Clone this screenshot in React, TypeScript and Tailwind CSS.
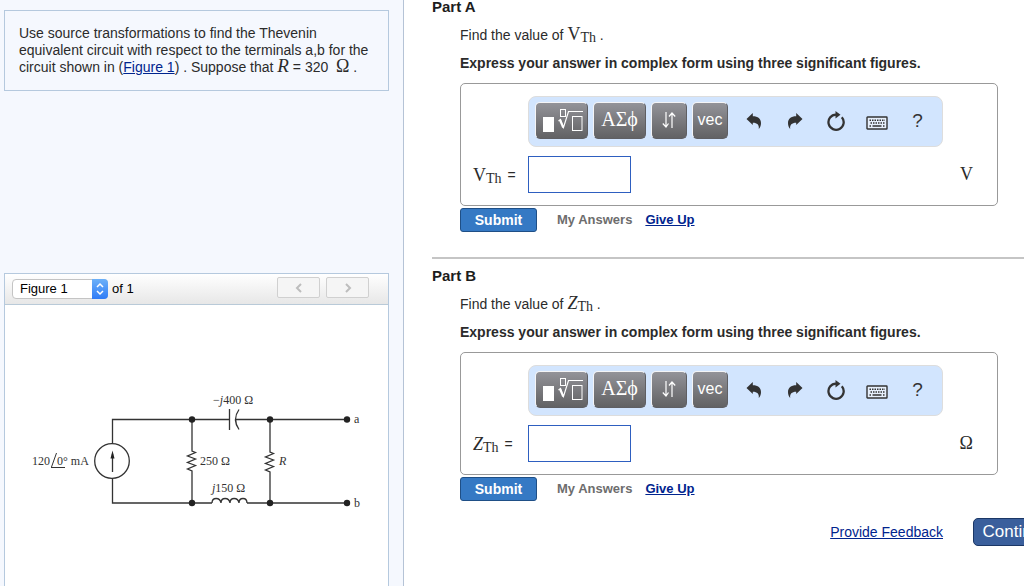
import type { ReactNode } from "react";

const serif = "font-['Liberation_Serif','Noto_Sans_CJK_SC',serif]";

function MathVar({ name, italic = false }: { name: string; italic?: boolean }) {
  return (
    <span className="whitespace-nowrap font-['Liberation_Serif',serif] text-[18px] leading-none">
      <span className={italic ? "italic" : ""}>{name}</span>
      <sub className="bottom-[-2px] text-[14px]">Th</sub>
    </span>
  );
}

function ToolButton({ label, wide = false, children }: { label: string; wide?: boolean; children: ReactNode }) {
  return (
    <button
      type="button"
      aria-label={label}
      className={
        "flex h-[37px] shrink-0 items-center justify-center rounded-[5px] border border-t-[#f4f4f6] border-l-[#f4f4f6] border-r-[#5f5f63] border-b-[#5f5f63] bg-linear-to-b from-[#939399] to-[#626264] pb-[2px] text-white " +
        (wide ? "w-[53px]" : "w-[36px]")
      }
    >
      {children}
    </button>
  );
}

function IconButton({ label, children }: { label: string; children: ReactNode }) {
  return (
    <button type="button" aria-label={label} className="flex h-[37px] w-[41px] items-center justify-center text-[#333]">
      {children}
    </button>
  );
}

function TemplateIcon() {
  return (
    <svg width="42" height="26" viewBox="0 0 42 26" fill="none" stroke="white">
      <rect x="2" y="10" width="11" height="15" fill="white" stroke="none" />
      <rect x="19.500" y="2.500" width="5" height="7" />
      <path d="M17.500 14l2-1.500 3 8L27.500 4.500H42" strokeWidth="1.200" />
      <path d="M19 13l3.200 7.500" strokeWidth="2" />
      <rect x="31.500" y="9.500" width="9.500" height="14" />
    </svg>
  );
}

function ArrowsIcon() {
  return (
    <svg width="14" height="18" viewBox="0 0 14 18" fill="none" stroke="white" strokeWidth="1.200">
      <path d="M4 1v15M.8 12.500L4 16l2.500-3.500M10 17V2M7 5.500L10 2l3.200 3.500" />
    </svg>
  );
}

function UndoIcon({ flip = false }: { flip?: boolean }) {
  return (
    <svg width="16" height="18" viewBox="0 0 16 18" fill="currentColor">
      <path
        transform={flip ? "translate(16 0) scale(-1 1)" : undefined}
        d="M.5 7L6.800 1v3.300c5.200 0 8.200 2.600 8.200 6.700 0 2.400-.7 4.300-2.200 6 .5-4.200-1.500-6.300-6-6.300V13z"
      />
    </svg>
  );
}

function ResetIcon() {
  return (
    <svg width="20" height="20" viewBox="0 0 20 20">
      <path d="M15.800 6.200A7.600 7.600 0 1 1 10 3.600" fill="none" stroke="currentColor" strokeWidth="2.300" />
      <path d="M9.500 0l5 3.800-5 3.600z" fill="currentColor" />
    </svg>
  );
}

function KeyboardIcon() {
  return (
    <svg width="22" height="18" viewBox="0 -4 22 18">
      <rect x="1" y="1" width="20" height="12" rx=".5" fill="#e6effb" stroke="currentColor" strokeWidth="1.400" />
      <path d="M3.500 4.200h15.500M4.500 7h14" stroke="currentColor" strokeWidth="1.500" strokeDasharray="1.500 1" />
      <path d="M3.500 10h1.500M6.500 10h9M17 10h1.500" stroke="currentColor" strokeWidth="1.500" />
    </svg>
  );
}

function Part({ id, title, name, italic, unit }: { id: string; title: string; name: string; italic?: boolean; unit: string }) {
  return (
    <section>
      <h2 className="text-[15px] leading-[14px] font-bold text-[#1d1d1d]">{title}</h2>
      <div className="mr-[26px] ml-7">
        <p className="mt-[11px] h-5 leading-5">
          Find the value of <MathVar name={name} italic={italic} /> .
        </p>
        <p className="mt-2 leading-5 font-bold">
          Express your answer in complex form using three significant figures.
        </p>
        <div className="mt-[10px] grid grid-cols-[55px_minmax(0,1fr)] gap-y-[9px] rounded-[5px] border border-[#999] pt-3 pr-6 pb-3 pl-3">
          <div className="col-start-2 flex h-[51px] w-[415px] items-center gap-[5px] rounded-[8px] border border-[#ddd] bg-[#d2e5fe] pb-[2px] pl-[6px]">
            <ToolButton label="Templates" wide>
              <TemplateIcon />
            </ToolButton>
            <ToolButton label="Greek symbols" wide>
              <span className={serif + " text-[20px]"}>ΑΣϕ</span>
            </ToolButton>
            <ToolButton label="Arrows">
              <ArrowsIcon />
            </ToolButton>
            <ToolButton label="Vector">
              <span className="text-base">vec</span>
            </ToolButton>
            <div className="flex">
              <IconButton label="Undo">
                <UndoIcon />
              </IconButton>
              <IconButton label="Redo">
                <UndoIcon flip />
              </IconButton>
              <IconButton label="Reset">
                <ResetIcon />
              </IconButton>
              <IconButton label="Keyboard shortcuts">
                <KeyboardIcon />
              </IconButton>
              <IconButton label="Help">
                <span className="text-[19px]">?</span>
              </IconButton>
            </div>
          </div>
          <label htmlFor={id} className="flex items-center gap-[6px] self-center whitespace-nowrap">
            <MathVar name={name} italic={italic} />
            <span>=</span>
          </label>
          <div className="flex items-center justify-between">
            <input id={id} type="text" className="h-[37px] w-[103px] border border-[#2e5fc0] bg-white px-2 outline-none" />
            <span className={serif + " text-[18px]"}>{unit}</span>
          </div>
        </div>
        <div className="mt-[2px] flex h-6 items-center text-[13px] font-bold">
          <button type="button" className="h-6 w-[77px] rounded-[3px] border border-[#1f4f86] bg-[#3579c4] text-sm text-white">
            Submit
          </button>
          <span className="ml-5 text-[#6d6d6d]">My Answers</span>
          <a href="#give-up" className="ml-[13px] text-[#00248e] underline">
            Give Up
          </a>
        </div>
      </div>
    </section>
  );
}

function Circuit() {
  return (
    <svg viewBox="5 305 383 281" className="block w-full" role="img" aria-label="Circuit with terminals a and b">
      <g fill="none" stroke="#333" strokeWidth="1.300">
        <path d="M112.500 443.500V419.500H229.500M236 419.500H347M112.500 478V503H212M247 503H347" />
        <circle cx="112" cy="461" r="17.300" />
        <path d="M112.500 472V454" />
        <path d="M192 419.500V451l3.500 1.500-8 3.500 8 3-8 3.500 8 3-8 3.500 4.500 2V503" />
        <path d="M270 419.500V452l3.500 1.500-8 3.500 8 3-8 3.500 8 3-8 3.500 4.500 2V503" />
        <path d="M229.500 409v21M239 409.500q-7 10 0 20" />
        <path d="M212 503c0-6 8-6 9 0 0-6 8-6 9 0 0-6 8-6 9 0 0-6 8-6 8 0" />
        <path d="M51 467.500h14M51.500 467l5-14" strokeWidth="1" />
      </g>
      <g fill="#222">
        <path d="M112.500 450.500l2 8h-4z" />
        <circle cx="192" cy="419.500" r="3.200" />
        <circle cx="270" cy="419.500" r="3.200" />
        <circle cx="347" cy="419.500" r="3.200" />
        <circle cx="192" cy="503" r="3.200" />
        <circle cx="270" cy="503" r="3.200" />
        <circle cx="347" cy="503" r="3.200" />
      </g>
      <g fill="#333" className="font-['Liberation_Serif',serif] text-[12px]">
        <text x="32" y="465">120</text>
        <text x="57" y="465">0° mA</text>
        <text x="213" y="404">−<tspan fontStyle="italic">j</tspan>400 Ω</text>
        <text x="200" y="465">250 Ω</text>
        <text x="212" y="492"><tspan fontStyle="italic">j</tspan>150 Ω</text>
        <text x="279" y="465" fontStyle="italic">R</text>
        <text x="354" y="423">a</text>
        <text x="354" y="507">b</text>
      </g>
    </svg>
  );
}

function PagerButton({ label, d }: { label: string; d: string }) {
  return (
    <button type="button" aria-label={label} className="flex h-[21px] w-[43px] items-center justify-center rounded-[2px] border border-[#d0d0d0] bg-[#f5f5f5]">
      <svg width="8" height="10" viewBox="0 0 8 10" fill="none" stroke="#bdbdbd" strokeWidth="2">
        <path d={d} />
      </svg>
    </button>
  );
}

export default function App() {
  return (
    <div className="flex min-h-screen overflow-hidden bg-white font-['Liberation_Sans',Arial,sans-serif] text-sm text-[#2b2b2b]">
      <aside className="flex w-[404px] shrink-0 flex-col border-r border-[#b5c3d6] bg-[#f5f8fe] pt-[10px] pr-[14px] pl-1">
        <div className="border border-[#b5c9de] px-[14px] py-[14px] leading-[17px]">
          Use source transformations to find the Thevenin equivalent circuit with respect to the terminals a,b for the
          circuit shown in (
          <a href="#figure" className="text-[#00248e] underline">
            Figure 1
          </a>
          ) . Suppose that <i className="font-['Liberation_Serif',serif] text-[19px] leading-[13px]">R</i> = 320{" "}
          &nbsp;<span className="font-['Liberation_Serif',serif] text-[18px] leading-[13px]">Ω</span> .
        </div>
        <div id="figure" className="mt-[182px] flex-1 border border-b-0 border-[#b5c9de] bg-white">
          <div className="flex h-[31px] items-start border-b border-[#b9cad8] bg-linear-to-b from-white to-[#e7e7e7] pr-[19px] pl-[7px] text-[13px] text-black">
            <div className="relative mt-[5px]">
              <select
                aria-label="Figure"
                className="block h-5 w-[96px] appearance-none rounded-[4px] border border-[#c4c4c4] bg-white pr-4 pl-[7px]"
              >
                <option>Figure 1</option>
              </select>
              <svg className="pointer-events-none absolute top-0 right-0 rounded-r-[4px] bg-linear-to-b from-[#6cb0f8] to-[#2f7bf6]" width="16" height="20" viewBox="0 0 16 20" fill="none" stroke="white" strokeWidth="1.500">
                <path d="M5 8l3-3 3 3M5 12l3 3 3-3" />
              </svg>
            </div>
            <span className="mt-[5px] ml-1 leading-5">of 1</span>
            <div className="mt-[3px] ml-auto flex gap-[6px]">
              <PagerButton label="Previous figure" d="M6 1L2 5l4 4" />
              <PagerButton label="Next figure" d="M2 1l4 4-4 4" />
            </div>
          </div>
          <Circuit />
        </div>
      </aside>
      <main className="min-w-0 flex-1 overflow-hidden pl-7">
        <Part id="vth" title="Part A" name="V" unit="V" />
        <hr className="mt-[25px] mb-[10px] border-t-2 border-[#c5c5c5]" />
        <Part id="zth" title="Part B" name="Z" italic unit="Ω" />
        <div className="mt-[17px] -mr-9 flex items-center justify-end gap-[30px]">
          <a href="#feedback" className="text-[#00248e] underline">
            Provide Feedback
          </a>
          <button type="button" className="h-7 w-[87px] rounded-[5px] border border-[#1b3766] bg-[#3a5f9c] text-[17px] text-white">
            Continue
          </button>
        </div>
      </main>
    </div>
  );
}
